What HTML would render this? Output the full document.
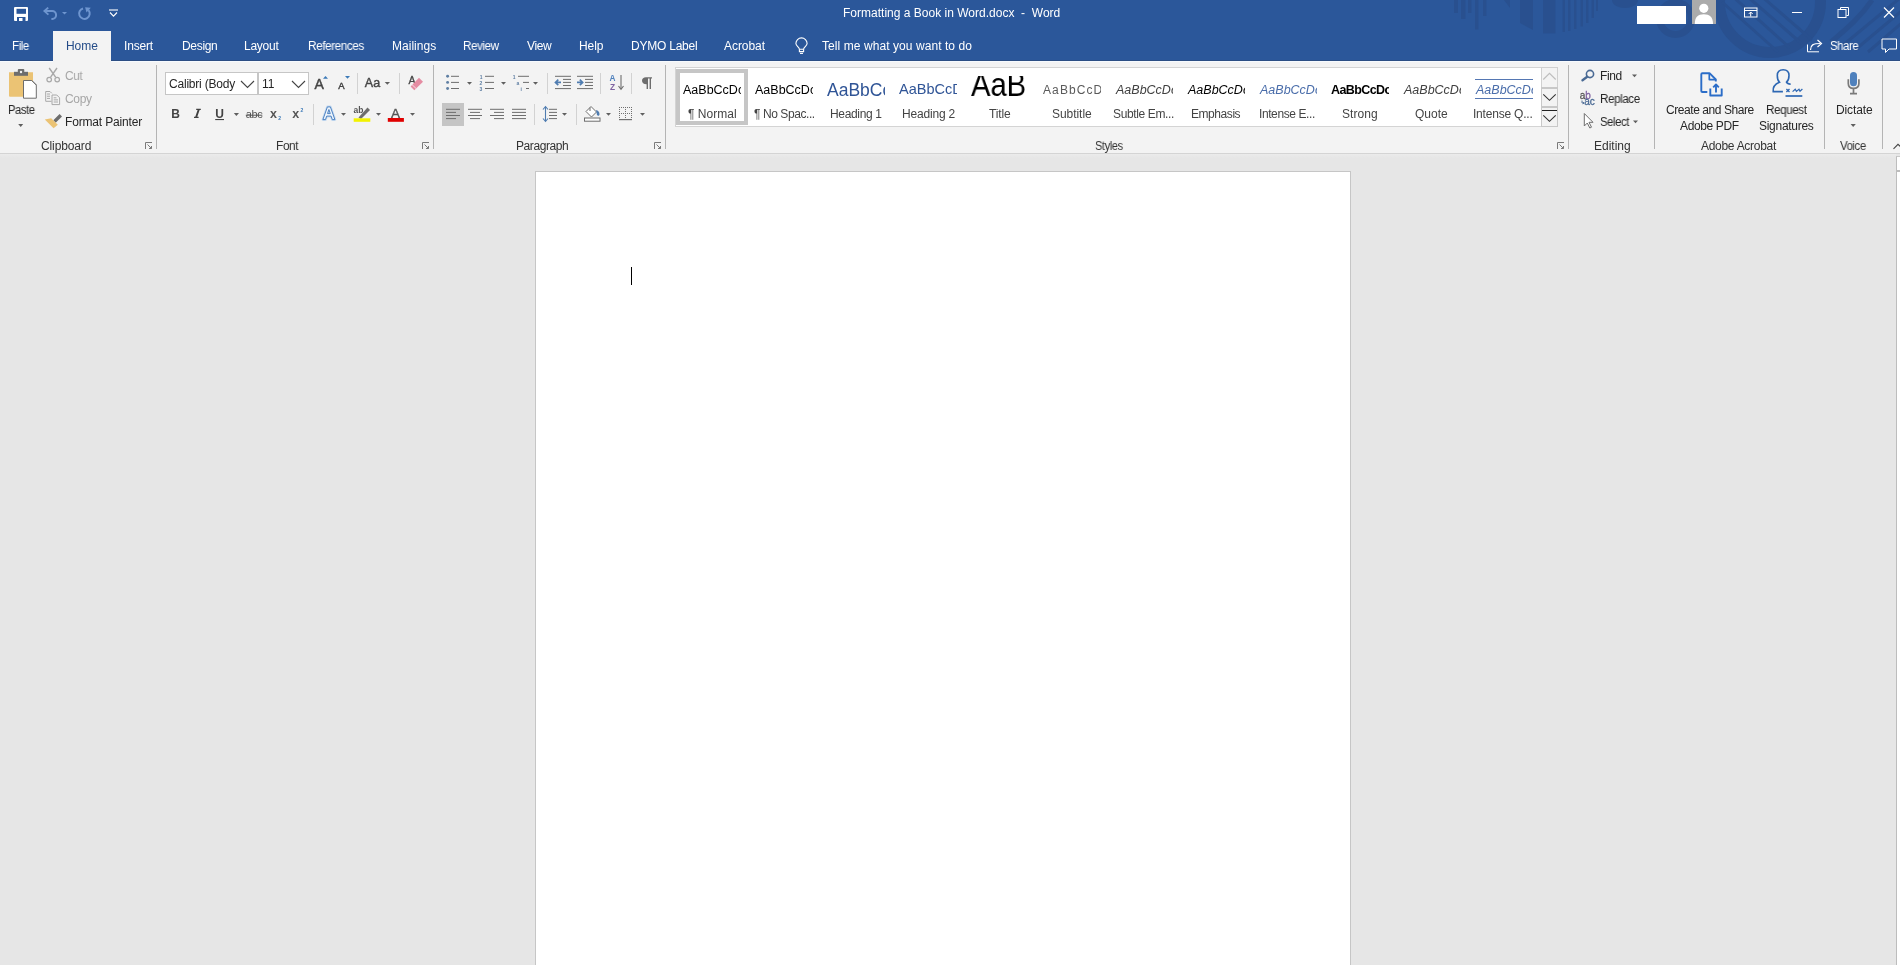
<!DOCTYPE html>
<html><head><meta charset="utf-8"><title>Formatting a Book in Word.docx - Word</title>
<style>
html,body{margin:0;padding:0;width:1900px;height:965px;overflow:hidden;background:#E6E6E6;font-family:"Liberation Sans",sans-serif}
.a{position:absolute}
.t{position:absolute;white-space:pre;transform-origin:0 0;will-change:transform;font-family:"Liberation Sans",sans-serif}
#top{position:absolute;left:0;top:0;width:1900px;height:61px;background:#2B579A;overflow:hidden}
#ribbon{position:absolute;left:0;top:61px;width:1900px;height:92px;background:#F3F3F3}
#rbb{position:absolute;left:0;top:153px;width:1900px;height:1px;background:#D4D4D4}
#shade{position:absolute;left:0;top:154px;width:1896px;height:4px;background:linear-gradient(#EBEBEB,#E6E6E6)}
.sep{position:absolute;width:1px;background:#D2D2D2}
.gsep{position:absolute;width:1px;top:65px;height:84px;background:#B4B4B4}
#page{position:absolute;left:535px;top:171px;width:814px;height:800px;background:#fff;border:1px solid #C6C6C6}
svg{position:absolute;overflow:visible}
</style></head><body>
<div id="top">
<svg width="1900" height="61" style="left:0;top:0">
 <g fill="#29508F" opacity="1">
  <rect x="1454" y="0" width="4" height="13"/>
  <rect x="1461" y="0" width="4.5" height="19"/>
  <rect x="1468" y="0" width="3.5" height="13"/>
  <rect x="1475" y="0" width="3.5" height="29.5"/>
  <rect x="1483" y="0" width="3.5" height="16"/>
  <polygon points="1504,0 1510,0 1510,8"/>
  <polygon points="1520,0 1533,0 1533,30 1520,23"/>
  <rect x="1543" y="0" width="12.5" height="33.5"/>
  <rect x="1562.5" y="0" width="2.5" height="32"/>
  <rect x="1568" y="0" width="2.5" height="31"/>
  <rect x="1574" y="0" width="2.5" height="29"/>
  <rect x="1580.5" y="0" width="2.5" height="26.5"/>
  <rect x="1586" y="0" width="2.5" height="23"/>
  <rect x="1591.5" y="0" width="2.5" height="18"/>
  <rect x="1596" y="0" width="2" height="11"/>
  <ellipse cx="1625" cy="0" rx="13" ry="8"/>
 </g>
 <g fill="none" stroke="#29508F">
  <circle cx="1675.5" cy="18.5" r="16" stroke-width="7"/>
  <circle cx="1770" cy="2" r="50.5" stroke-width="11"/>
  <path d="M1722,2 L1778,52 M1730,-6 L1790,48 M1740,-10 L1802,44 M1752,-12 L1812,40" stroke-width="3"/>
  <path d="M1831,42 C1845,30 1860,18 1872,0" stroke-width="5"/>
  <path d="M1842,46 L1900,-2 M1855,50 L1905,8 M1868,52 L1910,16" stroke-width="3"/>
 </g>
</svg>
<div class="a" style="left:53px;top:31px;width:58px;height:30px;background:#F3F3F3"></div>
</div>
<div id="ribbon"></div>
<div class="a" style="left:0;top:60px;width:53px;height:1px;background:#2C4E84"></div>
<div class="a" style="left:111px;top:60px;width:1789px;height:1px;background:#2C4E84"></div>
<div class="a" style="left:0;top:61px;width:53px;height:1px;background:#F6FAFE"></div>
<div class="a" style="left:111px;top:61px;width:1789px;height:1px;background:#F6FAFE"></div>
<div id="rbb"></div>
<div id="shade"></div>
<!-- group separators -->
<div class="gsep" style="left:156px"></div>
<div class="gsep" style="left:433px"></div>
<div class="gsep" style="left:665px"></div>
<div class="gsep" style="left:1568px"></div>
<div class="gsep" style="left:1654px"></div>
<div class="gsep" style="left:1824px"></div>
<div class="gsep" style="left:1882px"></div>
<!-- small separators -->
<div class="sep" style="left:357px;top:73px;height:21px"></div>
<div class="sep" style="left:399px;top:73px;height:21px"></div>
<div class="sep" style="left:313px;top:104px;height:21px"></div>
<div class="sep" style="left:547px;top:73px;height:21px"></div>
<div class="sep" style="left:600px;top:73px;height:21px"></div>
<div class="sep" style="left:631px;top:73px;height:21px"></div>
<div class="sep" style="left:534px;top:104px;height:21px"></div>
<div class="sep" style="left:576px;top:104px;height:21px"></div>
<!-- font combos -->
<div class="a" style="left:165px;top:72px;width:91px;height:21px;background:#fff;border:1px solid #C6C6C6"></div>
<div class="a" style="left:258px;top:72px;width:49px;height:21px;background:#fff;border:1px solid #C6C6C6"></div>
<!-- align left selected -->
<div class="a" style="left:442px;top:103px;width:22px;height:23px;background:#C5C5C5"></div>
<!-- styles gallery -->
<div class="a" style="left:675px;top:67px;width:866px;height:58px;background:#fff;border:1px solid #D4D4D4"></div>
<div class="a" style="left:676px;top:69px;width:64px;height:48px;border:4px solid #C6C6C6;background:#fff"></div>
<!-- gallery scroll buttons -->
<div class="a" style="left:1541px;top:67px;width:15px;height:20px;border:1px solid #D0D0D0;border-bottom:none;background:#F3F3F3"></div>
<div class="a" style="left:1541px;top:87px;width:17px;height:2px;background:#C8C8C8"></div>
<div class="a" style="left:1541px;top:89px;width:15px;height:17px;border:1px solid #C8C8C8;border-top:none;border-bottom:none;background:#F3F3F3"></div>
<div class="a" style="left:1541px;top:106px;width:17px;height:2px;background:#C8C8C8"></div>
<div class="a" style="left:1541px;top:108px;width:15px;height:18px;border:1px solid #C8C8C8;border-top:none;background:#F3F3F3"></div>
<!-- page -->
<div id="page"></div>
<div class="a" style="left:631px;top:267px;width:1px;height:18px;background:#000"></div>
<!-- scrollbar -->
<div class="a" style="left:1896px;top:156px;width:4px;height:809px;background:#fff;border-left:1px solid #BDBDBD;border-top:1px solid #C8C8C8;box-sizing:border-box"></div>
<div class="a" style="left:1896px;top:170px;width:4px;height:2px;background:#BDBDBD"></div>
<svg width="1900" height="160" style="left:0;top:0;will-change:transform" font-family="Liberation Sans">
<!-- QAT -->
<g>
 <rect x="14" y="7" width="14" height="14" rx="1" fill="#fff"/>
 <rect x="16.5" y="8.8" width="9.5" height="5" fill="#2B579A"/>
 <rect x="17" y="17" width="8.5" height="4" fill="#2B579A"/>
 <rect x="19" y="18" width="3.5" height="3" fill="#fff"/>
 <g fill="none" stroke="#6E95CF" stroke-width="2">
  <path d="M45,11.1 H52.2 A3.9,3.9 0 0 1 52.2,18.9 H51.4"/>
  <path d="M48.2,7.6 L44.4,11.1 L48.4,14.6" stroke-width="1.9"/>
  <path d="M83.03,8.48 A5.3,5.3 0 1 0 88.46,10.19"/>
 </g>
 <polygon points="85.1,7.2 90.8,7.8 86.5,12.6" fill="#6E95CF"/>
 <polygon points="62,12 67,12 64.5,14.6" fill="#6E95CF"/>
 <g fill="none" stroke="#fff" stroke-width="1.1">
  <path d="M109,10 H118"/>
  <path d="M110,12.5 L113.5,16.2 L117,12.5"/>
 </g>
</g>
<!-- lightbulb -->
<g fill="none" stroke="#fff" stroke-width="1.1">
 <path d="M799.4,49.2 C799.2,47.2 795.9,45.8 795.9,43.5 A5.6,5.6 0 1 1 807.1,43.5 C807.1,45.8 803.8,47.2 803.6,49.2 Z"/>
 <path d="M799.4,49.2 V51.6 H803.6 V49.2"/>
 <path d="M800,53.4 H803"/>
</g>
<!-- title right -->
<rect x="1637" y="6" width="49" height="18" fill="#fff"/>
<rect x="1692" y="0" width="24" height="24" fill="#ABABAB"/>
<circle cx="1703.8" cy="8.3" r="4.6" fill="#fff"/>
<path d="M1694.8,24 C1694.8,17 1698,14.3 1703.8,14.3 C1709.6,14.3 1713,17 1713,24 Z" fill="#fff"/>
<g fill="none" stroke="#fff" stroke-width="1">
 <rect x="1744.5" y="8" width="12.5" height="9"/>
 <path d="M1744.5,10.5 H1757"/>
 <path d="M1750.7,16.5 V12 M1748.7,14 L1750.7,12 L1752.7,14"/>
 <path d="M1792,12.5 H1802"/>
 <path d="M1840.5,9.5 V7.5 H1848.5 V15.5 H1846.5"/>
 <rect x="1838" y="9.5" width="8" height="8"/>
 <path d="M1884,7.5 L1894,17.5 M1894,7.5 L1884,17.5" stroke-width="1.2"/>
 <path d="M1807.5,44.5 V51.8 H1819"/>
 <path d="M1810.5,50 C1810.5,45 1813,43.5 1820.5,43.5" stroke-width="1.2"/>
 <path d="M1817.5,40 L1821.5,43.6 L1817.5,47" stroke-width="1.2"/>
 <path d="M1882,39 H1896.5 V49 H1889 L1885.5,52.5 V49 H1882 Z"/>
</g>
<!-- Clipboard group -->
<g>
 <path d="M9,72.2 H33 V96.8 H10 Q9,96.8 9,95.8 Z" fill="#EBC374"/>
 <rect x="14" y="71.8" width="14" height="4" fill="#6D6D6D"/>
 <rect x="17.8" y="68.9" width="6.5" height="3.5" rx="1" fill="#6D6D6D"/>
 <circle cx="21" cy="72" r="1.2" fill="#F3F3F3"/>
 <path d="M23.5,80.5 H31.8 L36.3,85 V98.2 H23.5 Z" fill="#fff" stroke="#6D6D6D" stroke-width="1" stroke-linejoin="miter"/>
 <path d="M31.8,80.5 L36.3,85" fill="none" stroke="#6D6D6D" stroke-width="1"/>
 <polygon points="18.2,124 23.2,124 20.7,127" fill="#5F5F5F"/>
 <g fill="none" stroke="#A8A8A8" stroke-width="1.2">
  <path d="M49.2,68 L55.6,77.2 M57,68 L50.6,77.2" stroke-width="1.4"/>
  <circle cx="49.2" cy="79.6" r="2.3"/>
  <circle cx="57.2" cy="79.6" r="2.3"/>
 </g>
 <g fill="none" stroke="#A8A8A8" stroke-width="1">
  <path d="M45.7,91.5 H50 L51.8,93.3 M45.7,91.5 V101.3 H51.5"/>
  <path d="M47,94 H50 M47,96.2 H50 M47,98.4 H50"/>
  <path d="M52,95 H56.8 L59.6,97.8 V104.6 H52 Z" fill="#F3F3F3"/>
  <path d="M53.7,97.8 H56.5 M53.7,99.9 H58 M53.7,102 H58"/>
 </g>
 <path d="M53.3,120.3 L59.6,114 L62,116.4 L55.7,122.7 Z" fill="#6D6D6D"/>
 <path d="M51.2,118.2 L57.8,124.8 L53.6,128.2 L44.8,119.4 Z" fill="#EBC374"/>
</g>
<!-- launchers -->
<g fill="none" stroke="#7A7A7A" stroke-width="1">
 <path d="M145.5,149 V142.5 H152"/><path d="M147.5,144.5 L151.5,148.5 M151.5,146 V148.5 H149"/>
 <path d="M422.5,149 V142.5 H429"/><path d="M424.5,144.5 L428.5,148.5 M428.5,146 V148.5 H426"/>
 <path d="M654.5,149 V142.5 H661"/><path d="M656.5,144.5 L660.5,148.5 M660.5,146 V148.5 H658"/>
 <path d="M1557.5,149 V142.5 H1564"/><path d="M1559.5,144.5 L1563.5,148.5 M1563.5,146 V148.5 H1561"/>
</g>
<!-- Font group -->
<g fill="none" stroke="#444" stroke-width="1.1">
 <path d="M241,81 L247.5,87.5 L254,81"/>
 <path d="M292,81 L298.5,87.5 L305,81"/>
</g>
<g fill="#444">
 <text x="314.6" y="89" font-size="14" stroke="#444" stroke-width="0.45">A</text>
 <text x="338.2" y="89" font-size="9.5" stroke="#444" stroke-width="0.45">A</text>
 <text x="364.8" y="86.8" font-size="12.5" stroke="#444" stroke-width="0.4">Aa</text>
 <text x="171.2" y="118" font-size="12" font-weight="bold">B</text>
 <path d="M196.2,108.8 H200.8 V110 H199.6 L197.3,116.7 H198.6 V117.9 H194 V116.7 H195.3 L197.6,110 H196.2 Z" fill="#404040"/>
 <text x="215.2" y="117.8" font-size="12" font-weight="bold">U</text>
 <rect x="215.2" y="119" width="8.8" height="1.1"/>
 <text x="245.8" y="118" font-size="11" fill="#555" letter-spacing="-0.4">abc</text>
 <rect x="245.8" y="114.7" width="16.5" height="1" fill="#555"/>
 <text x="269.9" y="118" font-size="12.5" font-weight="bold" fill="#555">x</text>
 <text x="292.2" y="118" font-size="12.5" font-weight="bold" fill="#555">x</text>
</g>
<g fill="#3C7AB8">
 <polygon points="323,78.7 328,78.7 325.5,76"/>
 <polygon points="345,76 350,76 347.5,78.7"/>
 <text x="278.2" y="120" font-size="5" font-weight="bold">2</text>
 <text x="300.5" y="111.8" font-size="5" font-weight="bold">2</text>
</g>
<g fill="#5F5F5F">
 <polygon points="384.7,82 390,82 387.35,84.7"/>
 <polygon points="233.8,113 239,113 236.4,116"/>
 <polygon points="341,113 346,113 343.5,115.7"/>
 <polygon points="376,113 381,113 378.5,115.7"/>
 <polygon points="410,113 415,113 412.5,115.7"/>
</g>
<!-- clear formatting -->
<text x="408.6" y="84.2" font-size="10.5" fill="#444" stroke="#444" stroke-width="0.3">A</text>
<path d="M419,77.7 L423,81.7 L414.3,90.3 L410.6,86.4 Z" fill="#E58CA2"/>
<path d="M412,84.6 L416.2,88.6" stroke="#F6E3E8" stroke-width="0.9"/>
<!-- text effects -->
<path d="M322.9,119.6 L327.4,106.9 L330.4,106.9 L334.9,119.6 L332.3,119.6 L331.1,116.1 L326.7,116.1 L325.5,119.6 Z M327.5,113.6 L330.3,113.6 L328.9,109.5 Z" fill="#E4EEF9" stroke="#C5DAF0" stroke-width="2.6" fill-rule="evenodd" stroke-linejoin="round"/>
<path d="M322.9,119.6 L327.4,106.9 L330.4,106.9 L334.9,119.6 L332.3,119.6 L331.1,116.1 L326.7,116.1 L325.5,119.6 Z M327.5,113.6 L330.3,113.6 L328.9,109.5 Z" fill="#EEF5FC" stroke="#4F83C2" stroke-width="1" fill-rule="evenodd" stroke-linejoin="round"/>
<!-- highlight -->
<text x="353.6" y="113" font-size="8.5" fill="#555" font-weight="bold">ab</text>
<path d="M358.5,117.5 L367.5,107.5 L370,110 L361,119 Z" fill="#6D6D6D"/>
<rect x="353.7" y="118.3" width="16.6" height="3.5" fill="#F2F200"/>
<!-- font color -->
<text x="391" y="118" font-size="13.5" fill="#555" stroke="#555" stroke-width="0.35">A</text>
<rect x="387.8" y="118" width="16.1" height="3.8" fill="#E00000"/>
<!-- Paragraph -->
<g fill="#5F7FA3">
 <circle cx="447.6" cy="76.3" r="1.45"/><circle cx="447.6" cy="82.4" r="1.45"/><circle cx="447.6" cy="88.5" r="1.45"/>
</g>
<g fill="none" stroke="#6D6D6D" stroke-width="1">
 <path d="M451,76.3 H459 M451,82.4 H459 M451,88.5 H459"/>
 <path d="M485,76.3 H494 M485,82.4 H494 M485,88.5 H494"/>
 <path d="M518,76.3 H529 M523,82.4 H529 M526,88.5 H529"/>
 <path d="M555,76.3 H571 M563,79.4 H571 M563,82.4 H571 M563,85.5 H571 M555,88.6 H571"/>
 <path d="M577,76.3 H593 M585,79.4 H593 M585,82.4 H593 M585,85.5 H593 M577,88.6 H593"/>
 <path d="M621,75 V89" stroke-width="1.1"/>
 <path d="M618.5,86 L621,89.3 L623.5,86" stroke-width="1.1"/>
 <path d="M446,109.3 H460 M446,112.4 H456 M446,115.5 H460 M446,118.6 H456"/>
 <path d="M468,109.3 H482 M470,112.4 H480 M468,115.5 H482 M470,118.6 H480"/>
 <path d="M490,109.3 H504 M494,112.4 H504 M490,115.5 H504 M494,118.6 H504"/>
 <path d="M512,109.3 H526 M512,112.4 H526 M512,115.5 H526 M512,118.6 H526"/>
 <path d="M549,109.3 H557 M549,112.4 H557 M549,115.5 H557 M549,118.6 H557"/>
</g>
<g font-size="5" font-weight="bold" fill="#5F7FA3">
 <text x="479.8" y="78.5">1</text><text x="479.6" y="84.6">2</text><text x="479.6" y="90.8">3</text>
 <text x="512.8" y="78.5">1</text><text x="516.5" y="84.6">a</text><text x="520.5" y="90.8">i</text>
</g>
<g fill="#5F5F5F">
 <polygon points="467,82 472,82 469.5,84.7"/>
 <polygon points="501,82 506,82 503.5,84.7"/>
 <polygon points="533,82 538,82 535.5,84.7"/>
 <polygon points="562,113 567,113 564.5,115.7"/>
 <polygon points="606,113 611,113 608.5,115.7"/>
 <polygon points="640,113 645,113 642.5,115.7"/>
</g>
<g fill="none" stroke="#4F7CB0" stroke-width="1.6">
 <path d="M561,82.4 H555.5 M558.3,79.6 L555.4,82.4 L558.3,85.2"/>
 <path d="M577,82.4 H582.6 M579.8,79.6 L582.7,82.4 L579.8,85.2"/>
</g>
<g fill="none" stroke="#4F7CB0" stroke-width="1.1">
 <path d="M545.5,107 V121"/>
 <path d="M543,109.5 L545.5,106.5 L548,109.5 M543,118.5 L545.5,121.5 L548,118.5"/>
</g>
<text x="609.6" y="81.4" font-size="8.3" fill="#4F81BD" font-weight="bold">A</text>
<text x="609.9" y="89.6" font-size="8.3" fill="#8064A2" font-weight="bold">Z</text>
<!-- pilcrow -->
<path d="M646,77.3 H652 V78.5 H651 V89 H649.6 V78.5 H648 V89 H646.6 V84.2 C643.5,84.2 642,82.6 642,80.7 C642,78.8 643.5,77.3 646,77.3 Z" fill="#6D6D6D"/>
<!-- shading -->
<g fill="none" stroke="#6D6D6D" stroke-width="1">
 <rect x="584.5" y="118" width="15.5" height="3.2" fill="#fff"/>
 <path d="M586,111.5 L591,106.5 L596.5,112 L591.5,117 Z" fill="#fff"/>
 <path d="M590,107.5 V111"/>
</g>
<path d="M596,110 C598,110.5 599.7,112 599.5,114.5 C599.3,116 597.8,116.3 597,115 Z" fill="#4F7CB0"/>
<!-- borders -->
<g fill="#707070"><rect x="619" y="107" width="1" height="1"/><rect x="619" y="113" width="1" height="1"/><rect x="621" y="107" width="1" height="1"/><rect x="621" y="113" width="1" height="1"/><rect x="623" y="107" width="1" height="1"/><rect x="623" y="113" width="1" height="1"/><rect x="625" y="107" width="1" height="1"/><rect x="625" y="113" width="1" height="1"/><rect x="627" y="107" width="1" height="1"/><rect x="627" y="113" width="1" height="1"/><rect x="629" y="107" width="1" height="1"/><rect x="629" y="113" width="1" height="1"/><rect x="631" y="107" width="1" height="1"/><rect x="631" y="113" width="1" height="1"/><rect x="619" y="109" width="1" height="1"/><rect x="625" y="109" width="1" height="1"/><rect x="631" y="109" width="1" height="1"/><rect x="619" y="111" width="1" height="1"/><rect x="625" y="111" width="1" height="1"/><rect x="631" y="111" width="1" height="1"/><rect x="619" y="113" width="1" height="1"/><rect x="625" y="113" width="1" height="1"/><rect x="631" y="113" width="1" height="1"/><rect x="619" y="115" width="1" height="1"/><rect x="625" y="115" width="1" height="1"/><rect x="631" y="115" width="1" height="1"/><rect x="619" y="117" width="1" height="1"/><rect x="625" y="117" width="1" height="1"/><rect x="631" y="117" width="1" height="1"/><rect x="619" y="119" width="13" height="1.2"/></g>
<!-- gallery scroll -->
<g fill="none" stroke-width="1.1">
 <path d="M1543.3,79.5 L1549.5,73.3 L1555.7,79.5" stroke="#BDBDBD"/>
 <path d="M1543.3,94.3 L1549.5,100.3 L1555.7,94.3" stroke="#333"/>
 <path d="M1542,110.5 H1557" stroke="#222" stroke-width="1"/>
 <path d="M1543.3,115.3 L1549.5,121.3 L1555.7,115.3" stroke="#333"/>
</g>
<!-- Editing -->
<g fill="none" stroke="#4A6A94">
 <circle cx="1590" cy="74" r="3.6" stroke-width="1.6"/>
 <path d="M1587.2,76.8 L1582.5,80.2" stroke-width="2.4" stroke-linecap="round"/>
</g>
<polygon points="1632,74.5 1637,74.5 1634.5,77.2" fill="#5F5F5F"/>
<polygon points="1633,120.5 1638,120.5 1635.5,123.2" fill="#5F5F5F"/>
<text x="1579.8" y="98.6" font-size="10" fill="#555" stroke="#555" stroke-width="0.3">a</text>
<text x="1585.2" y="98.6" font-size="10" fill="#8064A2" stroke="#8064A2" stroke-width="0.3">b</text>
<text x="1584.3" y="104.8" font-size="10" fill="#4A6A94" stroke="#4A6A94" stroke-width="0.3">ac</text>
<path d="M1582,100.5 V103 H1584 M1582.8,102 L1584,103 L1582.8,104" fill="none" stroke="#4A6A94" stroke-width="0.9"/>
<path d="M1584.3,113.5 V126 L1587.3,123 L1589.8,128 L1591.5,127.2 L1589,122.3 H1593 Z" fill="#fff" stroke="#6D6D6D" stroke-width="1"/>
<!-- Adobe -->
<g fill="none" stroke="#2B6DC8" stroke-width="1.9" stroke-linejoin="round">
 <path d="M1707.3,92 H1702.4 Q1701.3,92 1701.3,90.9 V74.3 Q1701.3,73.2 1702.4,73.2 H1709.5 L1715.8,79.5 V81.5"/>
 <path d="M1709.3,73.5 V79.6 H1715.5" stroke-width="1.7"/>
 <path d="M1710.3,88.5 V95.5 H1721.7 V88.5"/>
 <path d="M1716,92.5 V85"/>
 <path d="M1713.2,87.4 L1716,84.4 L1718.8,87.4" stroke-width="1.8"/>
</g>
<g fill="none" stroke="#2D67B3" stroke-width="1.6" stroke-linecap="butt">
 <path d="M1782.9,91.6 H1773.2 C1772.6,87 1775,84 1779.4,82.2 C1777.5,80.5 1777.3,78 1777.3,75.5 C1777.3,71.6 1780,69.8 1783.2,69.8 C1786.4,69.8 1789,71.6 1789,75.5 C1789,78 1788.6,80.5 1786.5,82.2 C1787,83.3 1788.5,84 1790.7,84.2"/>
 <path d="M1785.5,96 H1802.3" stroke-width="1.7"/>
 <path d="M1786.4,89 L1789.5,92 M1789.5,89 L1786.4,92" stroke-width="1.3"/>
 <path d="M1792.6,91.6 L1795.2,89.2 L1796.4,91.4 L1799,89.2 L1800,91.2 L1802.4,89" stroke-width="1.2"/>
</g>
<rect x="1850" y="72.1" width="7" height="14.2" rx="3.5" fill="#4F81BD"/>
<g fill="none" stroke="#7A7A7A" stroke-width="1.7">
 <path d="M1848.3,79.3 V83.5 C1848.3,86.6 1850.4,88.4 1853.5,88.4 C1856.6,88.4 1858.9,86.6 1858.9,83.5 V79.3"/>
 <path d="M1853.5,88.4 V93 M1850,93.6 H1857"/>
</g>
<polygon points="1850.6,124 1855.8,124 1853.2,127" fill="#5F5F5F"/>
<path d="M1893.5,148.8 L1898,144.3 L1902,148" fill="none" stroke="#444" stroke-width="1.1"/>
</svg>
<div class="a" style="left:1475px;top:78.5px;width:58px;height:1px;background:#5577B3"></div>
<div class="a" style="left:1475px;top:98px;width:58px;height:1px;background:#5577B3"></div>

<span class="t" style="left:843.00px;top:7.00px;font-size:12px;line-height:12px;color:#ffffff;letter-spacing:0.008px">Formatting a Book in Word.docx  -  Word</span>
<span class="t" style="left:12.40px;top:40.00px;font-size:12px;line-height:12px;color:#ffffff;transform:scaleX(0.9611);letter-spacing:-0.450px">File</span>
<span class="t" style="left:65.70px;top:40.00px;font-size:12px;line-height:12px;color:#254C88;letter-spacing:-0.045px">Home</span>
<span class="t" style="left:124.00px;top:40.00px;font-size:12px;line-height:12px;color:#ffffff;letter-spacing:-0.176px">Insert</span>
<span class="t" style="left:181.50px;top:40.00px;font-size:12px;line-height:12px;color:#ffffff;letter-spacing:-0.316px">Design</span>
<span class="t" style="left:244.40px;top:40.00px;font-size:12px;line-height:12px;color:#ffffff;letter-spacing:-0.259px">Layout</span>
<span class="t" style="left:307.60px;top:40.00px;font-size:12px;line-height:12px;color:#ffffff;transform:scaleX(0.9840);letter-spacing:-0.450px">References</span>
<span class="t" style="left:391.60px;top:40.00px;font-size:12px;line-height:12px;color:#ffffff;letter-spacing:0.026px">Mailings</span>
<span class="t" style="left:463.40px;top:40.00px;font-size:12px;line-height:12px;color:#ffffff;transform:scaleX(0.9698);letter-spacing:-0.450px">Review</span>
<span class="t" style="left:527.00px;top:40.00px;font-size:12px;line-height:12px;color:#ffffff;letter-spacing:-0.376px">View</span>
<span class="t" style="left:579.00px;top:40.00px;font-size:12px;line-height:12px;color:#ffffff;letter-spacing:-0.085px">Help</span>
<span class="t" style="left:631.00px;top:40.00px;font-size:12px;line-height:12px;color:#ffffff;letter-spacing:-0.225px">DYMO Label</span>
<span class="t" style="left:724.00px;top:40.00px;font-size:12px;line-height:12px;color:#ffffff;letter-spacing:-0.045px">Acrobat</span>
<span class="t" style="left:821.75px;top:40.00px;font-size:12px;line-height:12px;color:#ffffff;letter-spacing:0.071px">Tell me what you want to do</span>
<span class="t" style="left:1830.00px;top:40.00px;font-size:12px;line-height:12px;color:#ffffff;transform:scaleX(0.9493);letter-spacing:-0.450px">Share</span>
<span class="t" style="left:7.70px;top:104.00px;font-size:12px;line-height:12px;color:#262626;transform:scaleX(0.9346);letter-spacing:-0.450px">Paste</span>
<span class="t" style="left:64.50px;top:70.00px;font-size:12px;line-height:12px;color:#A6A6A6;transform:scaleX(0.9870);letter-spacing:-0.450px">Cut</span>
<span class="t" style="left:64.50px;top:93.00px;font-size:12px;line-height:12px;color:#A6A6A6;letter-spacing:-0.305px">Copy</span>
<span class="t" style="left:64.50px;top:116.00px;font-size:12px;line-height:12px;color:#262626;letter-spacing:-0.159px">Format Painter</span>
<span class="t" style="left:40.70px;top:139.60px;font-size:12px;line-height:12px;color:#333333;letter-spacing:-0.124px">Clipboard</span>
<span class="t" style="left:275.60px;top:139.60px;font-size:12px;line-height:12px;color:#333333;transform:scaleX(0.9945);letter-spacing:-0.450px">Font</span>
<span class="t" style="left:515.50px;top:139.60px;font-size:12px;line-height:12px;color:#333333;letter-spacing:-0.421px">Paragraph</span>
<span class="t" style="left:1094.50px;top:139.60px;font-size:12px;line-height:12px;color:#333333;transform:scaleX(0.9202);letter-spacing:-0.450px">Styles</span>
<span class="t" style="left:1593.50px;top:139.60px;font-size:12px;line-height:12px;color:#333333;letter-spacing:-0.003px">Editing</span>
<span class="t" style="left:1701.00px;top:139.60px;font-size:12px;line-height:12px;color:#333333;letter-spacing:-0.288px">Adobe Acrobat</span>
<span class="t" style="left:1840.00px;top:139.60px;font-size:12px;line-height:12px;color:#333333;transform:scaleX(0.9469);letter-spacing:-0.450px">Voice</span>
<span class="t" style="left:168.80px;top:78.00px;font-size:12px;line-height:12px;color:#262626;letter-spacing:-0.207px">Calibri (Body</span>
<span class="t" style="left:262.00px;top:78.00px;font-size:12px;line-height:12px;color:#262626">11</span>
<span class="t" style="left:1599.50px;top:70.00px;font-size:12px;line-height:12px;color:#262626;letter-spacing:-0.390px">Find</span>
<span class="t" style="left:1599.50px;top:93.00px;font-size:12px;line-height:12px;color:#262626;transform:scaleX(0.9723);letter-spacing:-0.450px">Replace</span>
<span class="t" style="left:1599.50px;top:116.00px;font-size:12px;line-height:12px;color:#262626;transform:scaleX(0.9444);letter-spacing:-0.450px">Select</span>
<span class="t" style="left:1665.50px;top:104.00px;font-size:12px;line-height:12px;color:#262626;letter-spacing:-0.437px">Create and Share</span>
<span class="t" style="left:1680.00px;top:120.00px;font-size:12px;line-height:12px;color:#262626;letter-spacing:-0.363px">Adobe PDF</span>
<span class="t" style="left:1766.40px;top:104.00px;font-size:12px;line-height:12px;color:#262626;transform:scaleX(0.9751);letter-spacing:-0.450px">Request</span>
<span class="t" style="left:1759.00px;top:120.00px;font-size:12px;line-height:12px;color:#262626;letter-spacing:-0.285px">Signatures</span>
<span class="t" style="left:1835.50px;top:104.00px;font-size:12px;line-height:12px;color:#262626;letter-spacing:-0.129px">Dictate</span>
<span class="t" style="left:687.50px;top:108.00px;font-size:12px;line-height:12px;color:#444444;letter-spacing:0.016px">¶ Normal</span>
<span class="t" style="left:753.50px;top:108.00px;font-size:12px;line-height:12px;color:#444444;letter-spacing:-0.425px">¶ No Spac...</span>
<span class="t" style="left:829.60px;top:108.00px;font-size:12px;line-height:12px;color:#444444;letter-spacing:-0.342px">Heading 1</span>
<span class="t" style="left:901.50px;top:108.00px;font-size:12px;line-height:12px;color:#444444;letter-spacing:-0.192px">Heading 2</span>
<span class="t" style="left:989.00px;top:108.00px;font-size:12px;line-height:12px;color:#444444;letter-spacing:-0.138px">Title</span>
<span class="t" style="left:1052.00px;top:108.00px;font-size:12px;line-height:12px;color:#444444;letter-spacing:-0.050px">Subtitle</span>
<span class="t" style="left:1113.00px;top:108.00px;font-size:12px;line-height:12px;color:#444444;letter-spacing:-0.366px">Subtle Em...</span>
<span class="t" style="left:1191.40px;top:108.00px;font-size:12px;line-height:12px;color:#444444;letter-spacing:-0.441px">Emphasis</span>
<span class="t" style="left:1259.40px;top:108.00px;font-size:12px;line-height:12px;color:#444444;letter-spacing:-0.406px">Intense E...</span>
<span class="t" style="left:1342.00px;top:108.00px;font-size:12px;line-height:12px;color:#444444;letter-spacing:0.064px">Strong</span>
<span class="t" style="left:1415.00px;top:108.00px;font-size:12px;line-height:12px;color:#444444;letter-spacing:-0.004px">Quote</span>
<span class="t" style="left:1473.00px;top:108.00px;font-size:12px;line-height:12px;color:#444444;letter-spacing:-0.209px">Intense Q...</span>
<div class="a" style="left:683px;top:74px;width:58px;height:26px;overflow:hidden"><span class="t" style="left:0.00px;top:10.00px;font-size:12.5px;line-height:12.5px;color:#000">AaBbCcDc</span></div>
<div class="a" style="left:755px;top:74px;width:58px;height:26px;overflow:hidden"><span class="t" style="left:-0.30px;top:10.00px;font-size:12.5px;line-height:12.5px;color:#000">AaBbCcDc</span></div>
<div class="a" style="left:827px;top:74px;width:58px;height:26px;overflow:hidden"><span class="t" style="left:0.00px;top:8.00px;font-size:17.5px;line-height:17.5px;color:#2F5496">AaBbCc</span></div>
<div class="a" style="left:899px;top:74px;width:58px;height:26px;overflow:hidden"><span class="t" style="left:0.00px;top:8.00px;font-size:14.5px;line-height:14.5px;color:#2F5496">AaBbCcD</span></div>
<div class="a" style="left:971px;top:76px;width:58px;height:24px;overflow:hidden"><span class="t" style="left:0.00px;top:-8.00px;font-size:33px;line-height:33px;color:#000;transform:scaleX(0.8850)">AaB</span></div>
<div class="a" style="left:1043px;top:74px;width:58px;height:26px;overflow:hidden"><span class="t" style="left:-0.20px;top:10.00px;font-size:12px;line-height:12px;color:#5A5A5A;letter-spacing:1.100px">AaBbCcD</span></div>
<div class="a" style="left:1115px;top:74px;width:58px;height:26px;overflow:hidden"><span class="t" style="left:0.80px;top:10.00px;font-size:12.5px;line-height:12.5px;color:#404040;font-style:italic">AaBbCcDc</span></div>
<div class="a" style="left:1187px;top:74px;width:58px;height:26px;overflow:hidden"><span class="t" style="left:1.00px;top:10.00px;font-size:12.5px;line-height:12.5px;color:#000;font-style:italic">AaBbCcDc</span></div>
<div class="a" style="left:1259px;top:74px;width:58px;height:26px;overflow:hidden"><span class="t" style="left:1.00px;top:10.00px;font-size:12.5px;line-height:12.5px;color:#4A6DAA;font-style:italic">AaBbCcDc</span></div>
<div class="a" style="left:1331px;top:74px;width:58px;height:26px;overflow:hidden"><span class="t" style="left:0.00px;top:10.00px;font-size:12.5px;line-height:12.5px;color:#000;font-weight:bold;letter-spacing:-0.600px">AaBbCcDc</span></div>
<div class="a" style="left:1403px;top:74px;width:58px;height:26px;overflow:hidden"><span class="t" style="left:0.80px;top:10.00px;font-size:12.5px;line-height:12.5px;color:#404040;font-style:italic">AaBbCcDc</span></div>
<div class="a" style="left:1475px;top:74px;width:58px;height:26px;overflow:hidden"><span class="t" style="left:1.00px;top:10.00px;font-size:12.5px;line-height:12.5px;color:#4A6DAA;font-style:italic">AaBbCcDc</span></div>
</body></html>
